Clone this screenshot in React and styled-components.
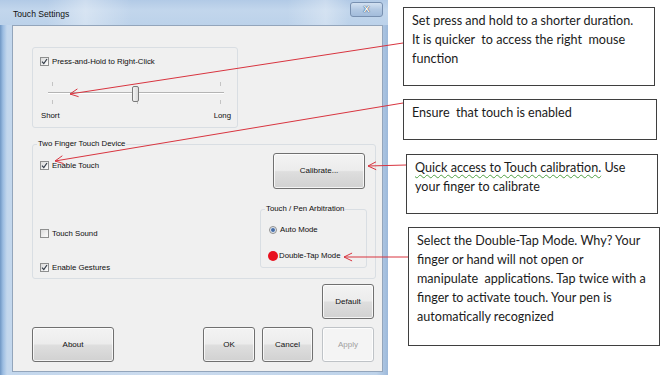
import React from "react";
import styled, { createGlobalStyle } from "styled-components";

const GlobalStyle = createGlobalStyle`
  html, body { margin: 0; padding: 0; background: #fff; }
  body { width: 666px; height: 375px; overflow: hidden; font-family: "Liberation Sans", Arial, sans-serif; }
`;

const ui = `"Liberation Sans", Arial, sans-serif`;

const Page = styled.div`
  position: relative;
  display: flex;
  align-items: flex-start;
  width: 666px;
  height: 375px;
  background: #fff;
  overflow: hidden;
`;

const Window = styled.div`
  width: 388px;
  height: 375px;
  flex-shrink: 0;
  display: flex;
  flex-direction: column;
  box-sizing: border-box;
  background: linear-gradient(90deg, #6f97c4 0px, #9cbde2 3px, #c3d7ed 7px, #ccdcef 40%, #bed3ea 97%, #9db9da 100%);
`;

const TitleBar = styled.div`
  height: 25px;
  flex-shrink: 0;
  display: flex;
  justify-content: space-between;
  align-items: flex-start;
  padding: 0 5px 0 13px;
  background:
    linear-gradient(90deg, rgba(255,255,255,0) 12%, rgba(255,255,255,.35) 22%, rgba(255,255,255,0) 34%, rgba(255,255,255,0) 74%, rgba(255,255,255,.3) 84%, rgba(255,255,255,0) 90%),
    linear-gradient(180deg, #b2cae6 0px, #c2d6ec 10px, #bcd2ea 25px);
`;

const Title = styled.span`
  font: 8.6px/10px ${ui};
  color: #111;
  padding-top: 9px;
`;

const CloseButton = styled.div`
  margin-top: 2px;
  width: 33px;
  height: 15px;
  box-sizing: border-box;
  border: 1px solid #7890b0;
  border-radius: 3px;
  background: linear-gradient(180deg, #d3e1f1 0%, #b3c9e3 50%, #a3bcdb 100%);
  display: flex;
  align-items: center;
  justify-content: center;
  color: #fff;
  font: bold 9px/1 ${ui};
  text-shadow: 0 0 1px #2a3a55, 0 0 1px #2a3a55;
`;

const Client = styled.div`
  flex: 1;
  margin: 0 5px 3px 12px;
  border: 1px solid #93a5bb;
  background: #f0f0f0;
  display: flex;
  flex-direction: column;
  font: 7.8px/10px ${ui};
  color: #0d0d0d;
`;

const SliderGroup = styled.div`
  margin: 21px 0 0 19px;
  width: 206px;
  height: 81px;
  box-sizing: border-box;
  border: 1px solid #d9dee3;
  border-radius: 3px;
  display: flex;
  flex-direction: column;
`;

const CheckRow = styled.label`
  display: flex;
  align-items: center;
  gap: 3px;
  height: 9px;
  margin: ${p => p.$top}px 0 0 ${p => p.$left ?? 7}px;
  white-space: nowrap;
`;

const CheckBoxBox = styled.span`
  width: 9px;
  height: 9px;
  box-sizing: border-box;
  border: 1px solid #8e8f8f;
  background: linear-gradient(135deg, #dcdcdc, #fdfdfd);
  display: flex;
  align-items: center;
  justify-content: center;
  flex-shrink: 0;
`;

function CheckBox({ checked }) {
  return (
    <CheckBoxBox>
      {checked && (
        <svg width="7" height="7" viewBox="0 0 7 7">
          <path d="M1 3.6 L2.8 5.6 L6 1" fill="none" stroke="#333c48" strokeWidth="1.2" />
        </svg>
      )}
    </CheckBoxBox>
  );
}

const Slider = styled.div`
  position: relative;
  width: 176px;
  height: 22px;
  margin: 16px 0 0 15px;
`;

const Track = styled.div`
  position: absolute;
  left: 0;
  right: 0;
  top: 10px;
  height: 1px;
  background: #b4b4b4;
  border-bottom: 1px solid #fff;
`;

const Tick = styled.div`
  position: absolute;
  left: ${p => p.$x}px;
  top: ${p => (p.$bottom ? 18 : 0)}px;
  width: 1px;
  height: 4px;
  background: #c4c4c4;
`;

const Thumb = styled.div`
  position: absolute;
  left: 84px;
  top: 4px;
  width: 7px;
  height: 16px;
  box-sizing: border-box;
  border: 1px solid #7a7a7a;
  border-radius: 2px;
  background: linear-gradient(90deg, #f4f4f4, #dadada);
`;

const SliderLabels = styled.div`
  display: flex;
  justify-content: space-between;
  width: 190px;
  margin: 7px 0 0 8px;
`;

const GroupBox = styled.div`
  position: relative;
  box-sizing: border-box;
  width: ${p => p.$w}px;
  height: ${p => p.$h}px;
  margin: ${p => p.$m};
  border: 1px solid #d9dee3;
  border-radius: 3px;
  display: flex;
  flex-direction: ${p => p.$dir || "row"};
`;

const GroupLabel = styled.span`
  position: absolute;
  top: -6px;
  left: 4px;
  padding: 0 1px;
  background: #f0f0f0;
  white-space: nowrap;
`;

const LeftColumn = styled.div`
  display: flex;
  flex-direction: column;
  flex: 1;
`;

const RightColumn = styled.div`
  display: flex;
  flex-direction: column;
  width: 107px;
  margin-right: 8px;
`;

const Button = styled.button`
  box-sizing: border-box;
  width: ${p => p.$w}px;
  height: ${p => p.$h || 35}px;
  margin: ${p => p.$m || 0};
  padding: 0;
  flex-shrink: 0;
  border: 1px solid ${p => (p.disabled ? "#bfc3c7" : "#707070")};
  border-radius: 3px;
  background: ${p =>
    p.disabled
      ? "#f4f4f4"
      : "linear-gradient(180deg, #f3f3f3 0%, #ececec 48%, #dedede 52%, #d1d1d1 100%)"};
  box-shadow: inset 0 0 0 1px rgba(255, 255, 255, 0.75);
  color: ${p => (p.disabled ? "#a0a0a0" : "#111")};
  font: 8px/10px ${ui};
`;

const RadioRow = styled.div`
  display: flex;
  align-items: center;
  gap: ${p => (p.$marked ? 1 : 3)}px;
  height: 10px;
  margin: ${p => p.$top}px 0 0 ${p => (p.$marked ? 7 : 8)}px;
  white-space: nowrap;
`;

const RadioDot = styled.span`
  width: ${p => (p.$marked ? 10 : 8)}px;
  height: ${p => (p.$marked ? 10 : 8)}px;
  box-sizing: border-box;
  border-radius: 50%;
  flex-shrink: 0;
  border: ${p => (p.$marked ? "none" : "1px solid #8e8f8f")};
  background: ${p =>
    p.$marked
      ? "#e8101e"
      : "radial-gradient(circle, #3a5f94 0, #5d82b8 1.6px, #dfe6ee 2.4px, #f6f6f6 100%)"};
`;

const DefaultRow = styled.div`
  display: flex;
  justify-content: flex-end;
  margin: 5px 8px 0 0;
`;

const BottomRow = styled.div`
  display: flex;
  margin: 8px 0 0 19px;
`;

const Notes = styled.div`
  display: flex;
  flex-direction: column;
`;

const Note = styled.div`
  box-sizing: border-box;
  width: ${p => p.$w}px;
  height: ${p => p.$h}px;
  margin: ${p => p.$mt}px 0 0 ${p => p.$ml}px;
  padding: 3px 8px;
  border: 1px solid #3f3f3f;
  background: #fff;
  font: 12.6px/19px Lato, "Liberation Sans", sans-serif;
  color: #1b1b1b;
  white-space: nowrap;
`;

const Flagged = styled.span`
  text-decoration: underline wavy #4f9f43;
  text-decoration-thickness: 1px;
  text-underline-offset: 2px;
`;

const Overlay = styled.svg`
  position: absolute;
  left: 0;
  top: 0;
  pointer-events: none;
`;

const arrows = [
  { from: [403, 43], to: [70, 94] },
  { from: [403, 103], to: [55, 161] },
  { from: [406, 165], to: [368, 166] },
  { from: [408, 257], to: [344, 257] },
];

function Arrow({ from, to }) {
  const dx = from[0] - to[0];
  const dy = from[1] - to[1];
  const len = Math.hypot(dx, dy);
  const ux = dx / len;
  const uy = dy / len;
  const a = (26 * Math.PI) / 180;
  const h = 9;
  const p1 = [to[0] + h * (ux * Math.cos(a) - uy * Math.sin(a)), to[1] + h * (ux * Math.sin(a) + uy * Math.cos(a))];
  const p2 = [to[0] + h * (ux * Math.cos(-a) - uy * Math.sin(-a)), to[1] + h * (ux * Math.sin(-a) + uy * Math.cos(-a))];
  return (
    <g stroke="#d8343f" strokeWidth="1" fill="none">
      <line x1={from[0]} y1={from[1]} x2={to[0]} y2={to[1]} />
      <polyline points={`${p1[0]},${p1[1]} ${to[0]},${to[1]} ${p2[0]},${p2[1]}`} />
    </g>
  );
}

export default function App() {
  return (
    <Page>
      <GlobalStyle />
      <Window>
        <TitleBar>
          <Title>Touch Settings</Title>
          <CloseButton>X</CloseButton>
        </TitleBar>
        <Client>
          <SliderGroup>
            <CheckRow $top={9}>
              <CheckBox checked />
              Press-and-Hold to Right-Click
            </CheckRow>
            <Slider>
              <Track />
              <Tick $x={4} />
              <Tick $x={172} />
              <Tick $x={4} $bottom />
              <Tick $x={89} $bottom />
              <Tick $x={172} $bottom />
              <Thumb />
            </Slider>
            <SliderLabels>
              <span>Short</span>
              <span>Long</span>
            </SliderLabels>
          </SliderGroup>

          <GroupBox $w={344} $h={135} $m="16px 0 0 19px">
            <GroupLabel>Two Finger Touch Device</GroupLabel>
            <LeftColumn>
              <CheckRow $top={16}>
                <CheckBox checked />
                Enable Touch
              </CheckRow>
              <CheckRow $top={59}>
                <CheckBox />
                Touch Sound
              </CheckRow>
              <CheckRow $top={25}>
                <CheckBox checked />
                Enable Gestures
              </CheckRow>
            </LeftColumn>
            <RightColumn>
              <Button $w={92} $h={36} $m="8px 0 0 13px">Calibrate...</Button>
              <GroupBox $w={107} $h={59} $m="20px 0 0 0" $dir="column">
                <GroupLabel>Touch / Pen Arbitration</GroupLabel>
                <RadioRow $top={15}>
                  <RadioDot />
                  Auto Mode
                </RadioRow>
                <RadioRow $top={16} $marked>
                  <RadioDot $marked />
                  Double-Tap Mode
                </RadioRow>
              </GroupBox>
            </RightColumn>
          </GroupBox>

          <DefaultRow>
            <Button $w={52}>Default</Button>
          </DefaultRow>
          <BottomRow>
            <Button $w={82}>About</Button>
            <Button $w={52} $m="0 0 0 89px">OK</Button>
            <Button $w={51} $m="0 0 0 7px">Cancel</Button>
            <Button $w={52} $m="0 0 0 9px" disabled>Apply</Button>
          </BottomRow>
        </Client>
      </Window>

      <Notes>
        <Note $w={252} $h={79} $mt={7} $ml={15}>
          Set press and hold to a shorter duration.
          <br />
          It is quicker&nbsp; to access the right&nbsp; mouse
          <br />
          function
        </Note>
        <Note $w={254} $h={41} $mt={13} $ml={15}>
          Ensure&nbsp; that touch is enabled
        </Note>
        <Note $w={252} $h={60} $mt={14} $ml={18}>
          <Flagged>Quick access to Touch calibration.</Flagged> Use
          <br />
          your finger to calibrate
        </Note>
        <Note $w={252} $h={119} $mt={13} $ml={20}>
          Select the Double-Tap Mode. Why? Your
          <br />
          finger or hand will not open or
          <br />
          manipulate&nbsp; applications. Tap twice with a
          <br />
          finger to activate touch. Your pen is
          <br />
          automatically recognized
        </Note>
      </Notes>

      <Overlay width="666" height="375" viewBox="0 0 666 375">
        {arrows.map((a, i) => (
          <Arrow key={i} {...a} />
        ))}
      </Overlay>
    </Page>
  );
}
